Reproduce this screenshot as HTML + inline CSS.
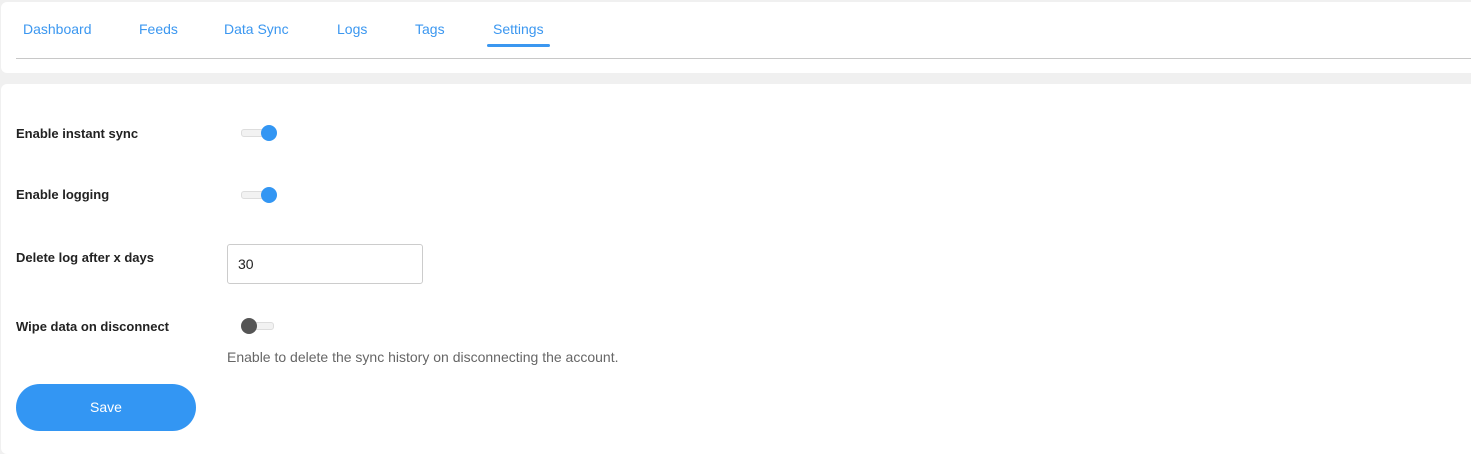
<!DOCTYPE html>
<html><head><style>
body{margin:0;background:#f0f0f0;font-family:"Liberation Sans",sans-serif;width:1471px;height:443px;overflow:hidden;position:relative}
.card{position:absolute;background:#fff;border-radius:6px}
.nav{position:absolute;top:21px;font-size:14px;color:#3b97f0}
.lbl{position:absolute;left:16px;font-size:13px;font-weight:bold;color:#222}
.track{position:absolute;width:30px;height:6px;border-radius:3px;background:#f2f2f2;border:1px solid #ddd}
.knob{position:absolute;width:16px;height:16px;border-radius:50%}
</style></head><body>
<div class="card" style="left:1px;top:2px;width:1480px;height:71px"></div>
<div class="nav" style="left:23px">Dashboard</div>
<div class="nav" style="left:139px">Feeds</div>
<div class="nav" style="left:224px">Data Sync</div>
<div class="nav" style="left:337px">Logs</div>
<div class="nav" style="left:415px">Tags</div>
<div class="nav" style="left:493px">Settings</div>
<div style="position:absolute;left:487px;top:44px;width:63px;height:3px;background:#3b97f0;border-radius:2px"></div>
<div style="position:absolute;left:16px;top:58px;width:1460px;height:1px;background:#c8c8c8"></div>

<div class="card" style="left:1px;top:84px;width:1480px;height:370px"></div>
<div class="lbl" style="top:126px">Enable instant sync</div>
<div class="track" style="left:241px;top:129px"></div>
<div class="knob" style="left:261px;top:125px;background:#3396f3"></div>
<div class="lbl" style="top:187px">Enable logging</div>
<div class="track" style="left:241px;top:191px"></div>
<div class="knob" style="left:261px;top:187px;background:#3396f3"></div>
<div class="lbl" style="top:250px">Delete log after x days</div>
<div style="position:absolute;left:227px;top:244px;width:194px;height:38px;border:1px solid #ccc;border-radius:3px;font-size:14px;color:#222;line-height:38px;box-sizing:content-box"><span style="padding-left:10px">30</span></div>
<div class="lbl" style="top:319px">Wipe data on disconnect</div>
<div class="track" style="left:242px;top:322px"></div>
<div class="knob" style="left:241px;top:318px;background:#555"></div>
<div style="position:absolute;left:227px;top:349px;font-size:14px;color:#666">Enable to delete the sync history on disconnecting the account.</div>
<div style="position:absolute;left:16px;top:384px;width:180px;height:47px;border-radius:24px;background:#3396f3;color:#fff;font-size:14px;text-align:center;line-height:47px">Save</div>
</body></html>
